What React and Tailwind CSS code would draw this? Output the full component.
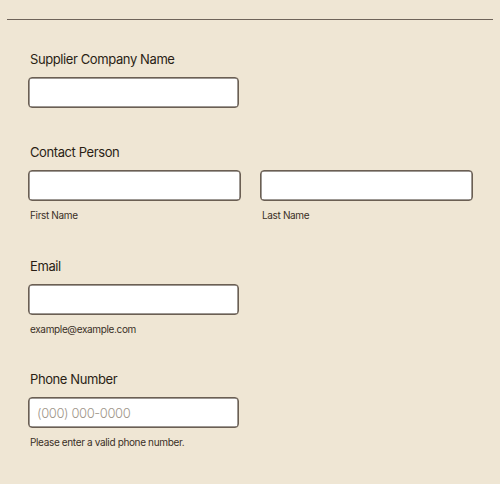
export default function App() {
  const font = { fontFamily: 'Inter, "Noto Sans", sans-serif' };
  const inputCls =
    "block h-[31px] rounded-[4px] border border-[#6b5f53] bg-white px-2 text-[13px] tracking-[-0.4px] text-[#2c2016] outline-none placeholder:text-[#a0968a] shadow-[inset_0_0_0_0.5px_#3d3228]";
  const labelCls = "h-[18px] pl-[2px] text-[13px] tracking-[-0.4px] leading-[18px] text-[#2a1e14]";
  const subCls = "mt-[7px] pl-[2px] text-[10px] tracking-[-0.35px] leading-[14px] text-[#3a2f26]";
  return (
    <div className="min-h-[484px] w-[500px] bg-[#efe6d4] text-[#2c2016]" style={font}>
      <div className="px-[7px] pt-[19px]">
        <div className="h-px bg-[#6e6359]" />
      </div>
      <div className="pl-[28px] pr-[28px]">
        <div className="pt-[30px]">
          <div className={labelCls}>Supplier Company Name</div>
          <div className="mt-[9px]">
            <input className={inputCls + " w-[211px]"} />
          </div>
        </div>
        <div className="pt-[35px]">
          <div className={labelCls}>Contact Person</div>
          <div className="mt-[9px] flex gap-[19px]">
            <div>
              <input className={inputCls + " w-[213px]"} />
              <div className={subCls}>First Name</div>
            </div>
            <div>
              <input className={inputCls + " w-[213px]"} />
              <div className={subCls}>Last Name</div>
            </div>
          </div>
        </div>
        <div className="pt-[35px]">
          <div className={labelCls}>Email</div>
          <div className="mt-[9px]">
            <input className={inputCls + " w-[211px]"} />
            <div className={subCls}>example@example.com</div>
          </div>
        </div>
        <div className="pt-[34px]">
          <div className={labelCls}>Phone Number</div>
          <div className="mt-[9px]">
            <input
              className={inputCls + " w-[211px]"}
              placeholder="(000) 000-0000"
              style={{ fontWeight: 300 }}
            />
            <div className={subCls}>Please enter a valid phone number.</div>
          </div>
        </div>
      </div>
    </div>
  );
}
